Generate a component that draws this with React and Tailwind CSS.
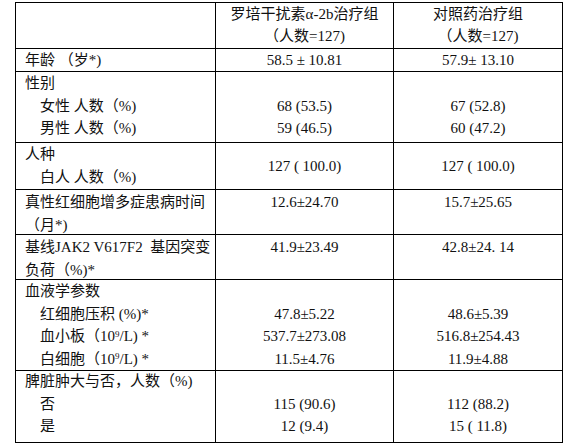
import React from "react";

const rows = [
  {
    h: "h-[23px]",
    left: [{ t: "年龄 （岁*)" }],
    a: ["58.5 ± 10.81"],
    b: ["57.9± 13.10"],
  },
  {
    h: "h-[71px]",
    left: [{ t: "性别" }, { t: "女性 人数（%)", sub: true }, { t: "男性 人数（%)", sub: true }],
    a: ["", "68 (53.5)", "59 (46.5)"],
    b: ["", "67 (52.8)", "60 (47.2)"],
  },
  {
    h: "h-[47px]",
    left: [{ t: "人种" }, { t: "白人 人数（%)", sub: true }],
    a: ["127 ( 100.0)"],
    b: ["127 ( 100.0)"],
    middle: true,
  },
  {
    h: "h-[45px]",
    pt: "pt-[1px]",
    left: [{ t: "真性红细胞增多症患病时间" }, { t: "（月*)" }],
    a: ["12.6±24.70"],
    b: ["15.7±25.65"],
  },
  {
    h: "h-[45px]",
    pt: "pt-[1px]",
    left: [{ t: "基线JAK2 V617F2  基因突变" }, { t: "负荷（%)*" }],
    a: ["41.9±23.49"],
    b: ["42.8±24. 14"],
  },
  {
    h: "h-[91px]",
    left: [
      { t: "血液学参数" },
      { t: "红细胞压积 (%)*", sub: true },
      { t: "血小板（10", sup: "9", rest: "/L) *", sub: true },
      { t: "白细胞（10", sup: "9", rest: "/L) *", sub: true },
    ],
    a: ["", "47.8±5.22", "537.7±273.08", "11.5±4.76"],
    b: ["", "48.6±5.39", "516.8±254.43", "11.9±4.88"],
  },
  {
    h: "h-[72px]",
    pt: "-mt-[1px]",
    left: [{ t: "脾脏肿大与否，人数（%)" }, { t: "否", sub: true }, { t: "是", sub: true }],
    a: ["", "115 (90.6)", "12 (9.4)"],
    b: ["", "112 (88.2)", "15 ( 11.8)"],
  },
];

const Lines = ({ lines }) =>
  lines.map((l, i) => (
    <div key={i} className="h-[22.5px] whitespace-pre">
      {l}
    </div>
  ));

export default function App() {
  return (
    <div className="min-h-screen bg-white pl-[15px] pt-[2px] font-['Liberation_Serif','Noto_Sans_CJK_SC',serif] text-[15px] leading-[22px] text-[#111]">
      <div className="w-[548px] border border-black">
        <div className="grid h-[45px] grid-cols-[200px_178px_168px] text-center">
          <div className="border-r border-black"></div>
          <div className="border-r border-black">
            <div className="h-[22px]">罗培干扰素α-2b治疗组</div>
            <div className="h-[22px]">（人数=127)</div>
          </div>
          <div>
            <div className="h-[22px]">对照药治疗组</div>
            <div className="h-[22px]">（人数=127)</div>
          </div>
        </div>
        {rows.map((row, i) => (
          <div key={i} className={`grid grid-cols-[200px_178px_168px] overflow-hidden border-t border-black ${row.h}`}>
            <div className={`border-r border-black pl-[9px] ${row.pt || ""}`}>
              {row.left.map((l, j) => (
                <div key={j} className={`h-[22.5px] whitespace-pre ${l.sub ? "pl-[15px]" : ""}`}>
                  {l.t}
                  {l.sup && <sup className="text-[9px]">{l.sup}</sup>}
                  {l.rest}
                </div>
              ))}
            </div>
            <div
              className={`border-r border-black text-center ${row.middle ? "flex flex-col justify-center" : row.pt || ""}`}
            >
              <Lines lines={row.a} />
            </div>
            <div className={`text-center ${row.middle ? "flex flex-col justify-center" : row.pt || ""}`}>
              <Lines lines={row.b} />
            </div>
          </div>
        ))}
      </div>
    </div>
  );
}
